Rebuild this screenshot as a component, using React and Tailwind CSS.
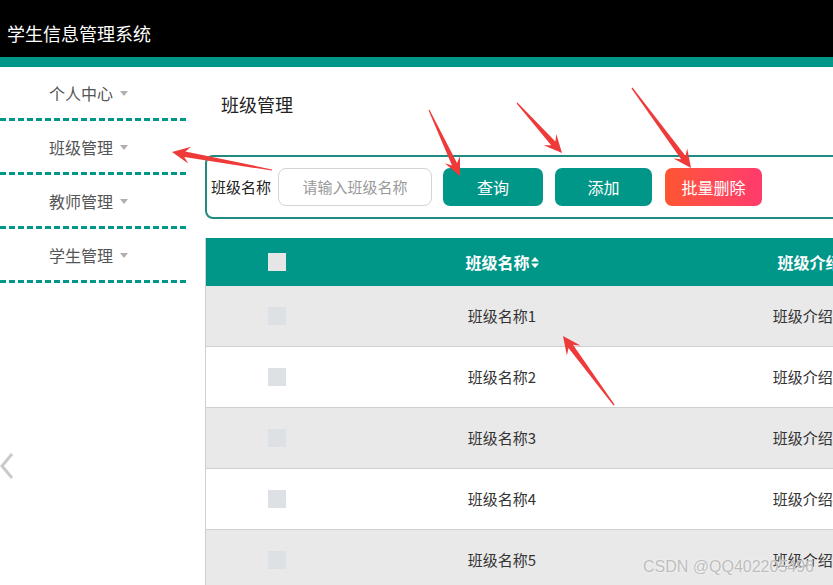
const NAV = ['个人中心', '班级管理', '教师管理', '学生管理'];
const ROWS = [1, 2, 3, 4, 5];

// screenshot annotations: [tailX, tailY, tipX, tipY]
const ARROWS = [
  [272, 170, 172, 152],
  [429, 110, 460, 176],
  [517, 103, 562, 153],
  [632, 88, 691, 168],
  [614, 405, 563, 336],
];

function arrowPoints([x1, y1, x2, y2]) {
  const dx = x2 - x1;
  const dy = y2 - y1;
  const len = Math.hypot(dx, dy);
  const ux = dx / len;
  const uy = dy / len;
  const nx = -uy;
  const ny = ux;
  const hl = 18;
  const hw = 8.5;
  const sw = 2.8;
  const bx = x2 - ux * hl;
  const by = y2 - uy * hl;
  const jx = x2 - ux * hl * 0.72;
  const jy = y2 - uy * hl * 0.72;
  const pts = [
    [x1 + nx * 0.6, y1 + ny * 0.6],
    [jx + nx * sw, jy + ny * sw],
    [bx + nx * hw, by + ny * hw],
    [x2, y2],
    [bx - nx * hw, by - ny * hw],
    [jx - nx * sw, jy - ny * sw],
    [x1 - nx * 0.6, y1 - ny * 0.6],
  ];
  return pts.map(p => p.map(v => v.toFixed(1)).join(',')).join(' ');
}

function SortIcon() {
  return (
    <svg className="w-[8px] h-[11px] ml-[1px]" viewBox="0 0 8 11" fill="#fff">
      <polygon points="0,4.5 4,0 8,4.5" />
      <polygon points="0,6.5 8,6.5 4,11" />
    </svg>
  );
}

export default function App() {
  return (
    <div className="relative w-[833px] h-[585px] overflow-hidden bg-white font-['Noto_Sans_CJK_SC','Microsoft_YaHei',sans-serif]">
      <header className="h-[57px] bg-black flex items-center pl-[7px] pt-[9px] text-white text-[18px]">
        学生信息管理系统
      </header>
      <div className="h-[10px] bg-[#009688]" />

      <div className="flex h-[518px]">
        <aside className="relative w-[188px] shrink-0">
          {NAV.map(n => (
            <div key={n}>
              <div className="h-[51px] flex items-center pl-[49px] text-[16px] text-[#555]">
                {n}
                <span className="ml-[7px] mt-[1px] border-x-[4.5px] border-x-transparent border-t-[5px] border-t-[#b0b0b0]" />
              </div>
              <div className="h-[3px] bg-[repeating-linear-gradient(90deg,#009688_0_6px,transparent_6px_9px)]" />
            </div>
          ))}
          <svg className="absolute left-0 top-[385px] w-[14px] h-[28px]" viewBox="0 0 14 28" fill="none">
            <polyline points="12,2 2,14 12,26" stroke="#cacaca" strokeWidth="3" />
          </svg>
        </aside>

        <main className="flex-1 min-w-0 overflow-hidden pl-[17px]">
          <div className="w-[900px]">
            <h2 className="pt-[25px] pl-[16px] text-[18px] leading-[24px] text-[#222]">班级管理</h2>

            <div className="mt-[39px] h-[64px] border-2 border-[#218b82] rounded-[8px] flex items-center pl-[4px]">
              <span className="text-[15px] text-[#222]">班级名称</span>
              <div className="ml-[7px] w-[154px] h-[38px] rounded-[8px] border border-[#d4d4d4] flex items-center justify-center text-[15px] text-[#999]">
                请输入班级名称
              </div>
              <button className="ml-[11px] w-[100px] h-[38px] rounded-[7px] bg-[#009688] text-white text-[16px]">查询</button>
              <button className="ml-[12px] w-[97px] h-[38px] rounded-[7px] bg-[#009688] text-white text-[16px]">添加</button>
              <button className="ml-[13px] w-[97px] h-[38px] rounded-[7px] bg-linear-to-r from-[#ff5530] to-[#ff3a6c] text-white text-[16px]">批量删除</button>
            </div>

            <div className="mt-[19px] border-l border-[#cfcfcf]">
              <div className="h-[48px] bg-[#009688] grid grid-cols-[141px_310px_310px] items-center text-white text-[16px] font-bold">
                <div className="flex justify-center">
                  <span className="w-[18px] h-[18px] bg-[#e6e6e6]" />
                </div>
                <div className="flex justify-center items-center">班级名称<SortIcon /></div>
                <div className="flex justify-center items-center pl-[4px]">班级介绍<SortIcon /></div>
              </div>
              {ROWS.map(i => (
                <div
                  key={i}
                  className={`h-[61px] border-b border-[#d0d0d0] grid grid-cols-[141px_310px_310px] items-center text-[15px] text-[#333] ${i % 2 ? 'bg-[#e9e9e9]' : 'bg-white'}`}
                >
                  <div className="flex justify-center">
                    <span className="w-[18px] h-[18px] bg-[#dde1e6]" />
                  </div>
                  <div className="text-center">班级名称{i}</div>
                  <div className="text-center pr-[10px]">班级介绍{i}</div>
                </div>
              ))}
            </div>
          </div>
        </main>
      </div>

      <div className="absolute left-[643px] top-[557px] text-[16px] leading-[20px] text-[#bdbdbd] font-['Liberation_Sans',sans-serif] [text-shadow:0_0_2px_#fff]">
        CSDN @QQ402205496
      </div>

      <svg className="absolute inset-0 w-[833px] h-[585px] pointer-events-none" viewBox="0 0 833 585">
        {ARROWS.map((a, i) => (
          <polygon key={i} points={arrowPoints(a)} fill="#ef3a3a" />
        ))}
      </svg>
    </div>
  );
}
